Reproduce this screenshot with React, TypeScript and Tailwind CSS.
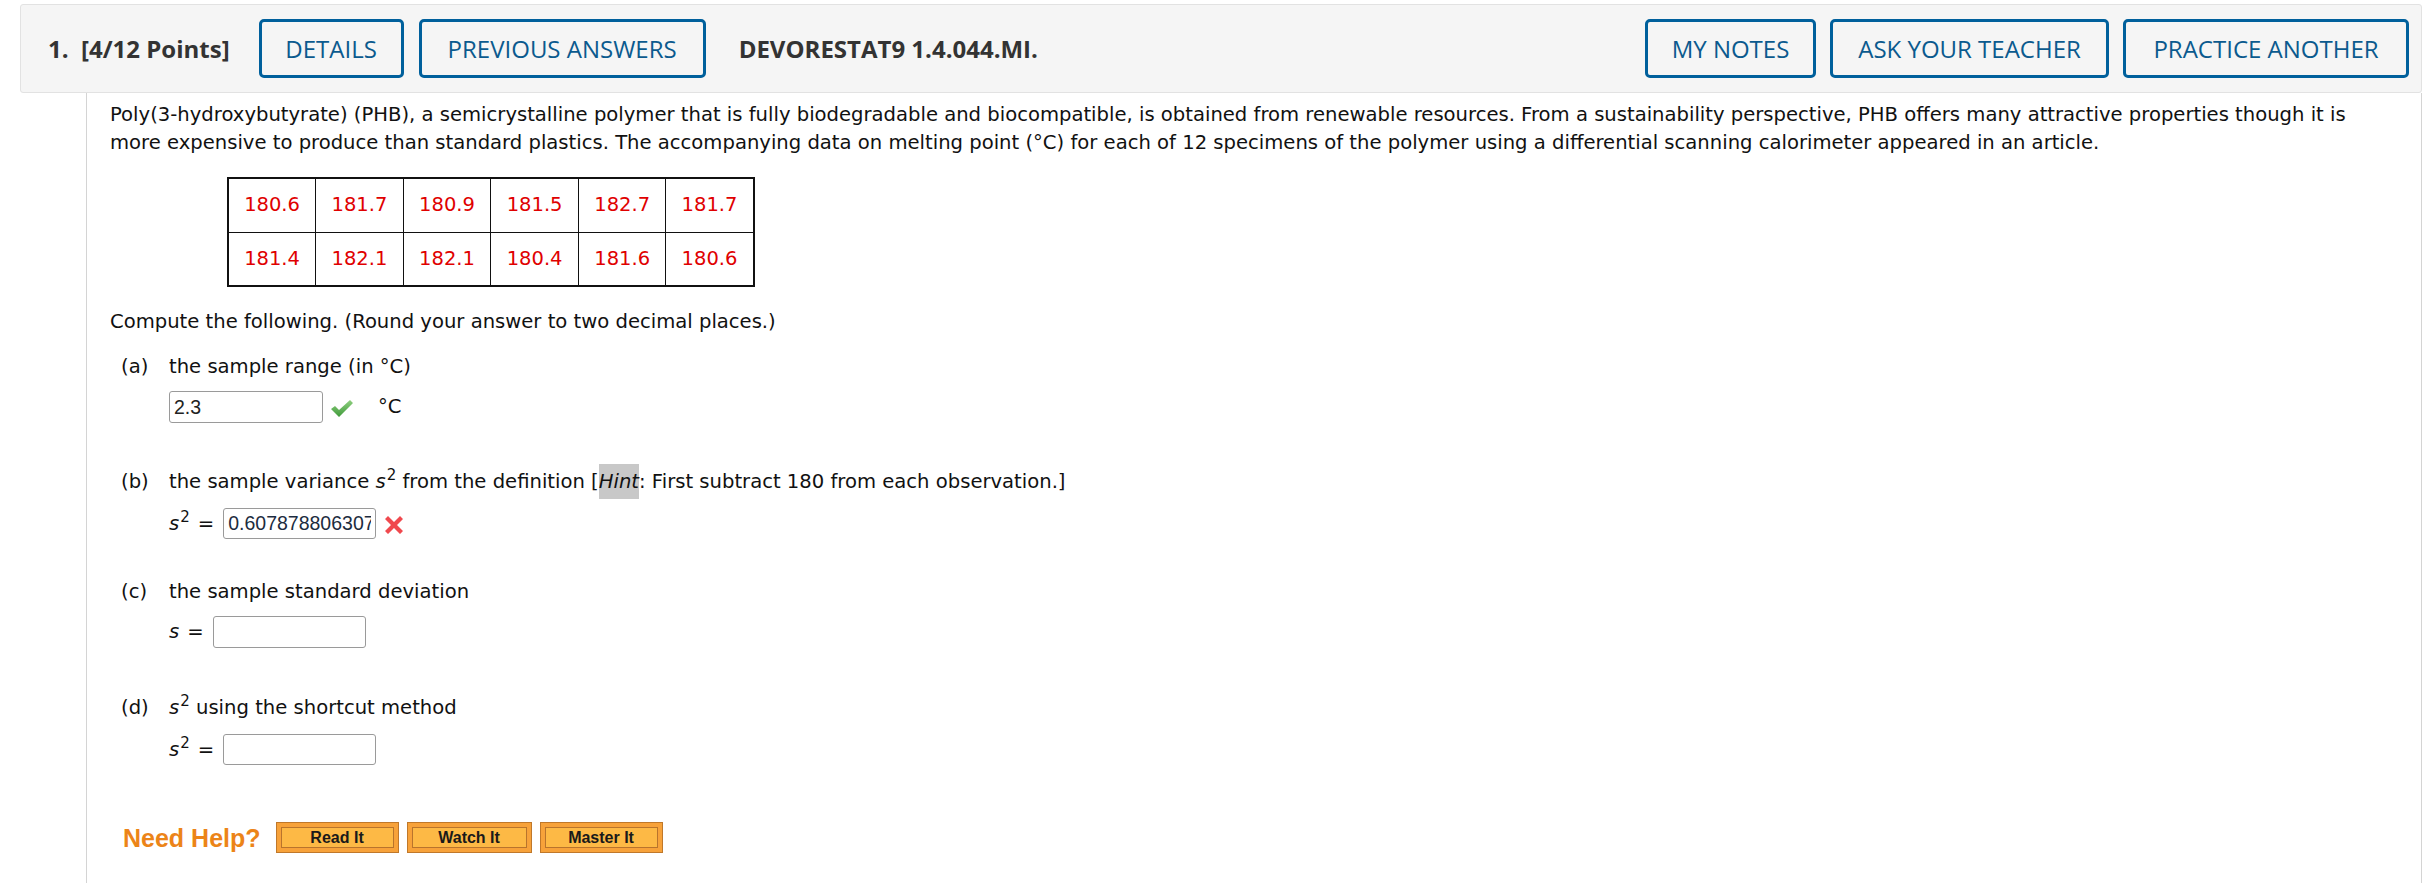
import React from 'react'

const headerFont = { fontFamily: '"Open Sans", "Liberation Sans", sans-serif' }
const bodyFont = { fontFamily: '"DejaVu Sans", Verdana, sans-serif' }
const arial = { fontFamily: '"Liberation Sans", Arial, sans-serif' }

const data = [
  ['180.6', '181.7', '180.9', '181.5', '182.7', '181.7'],
  ['181.4', '182.1', '182.1', '180.4', '181.6', '180.6'],
]

function HeadButton({ label, w }: { label: string; w: string }) {
  return (
    <button
      className={`${w} h-[59px] rounded-[5px] border-[3px] border-[#00609c] bg-[#f5f5f5] text-[24px] text-[#0b5a8e] flex items-center justify-center`}
      style={headerFont}
    >
      {label}
    </button>
  )
}

function Check() {
  return (
    <svg width="24" height="20" viewBox="0 0 24 20">
      <defs>
        <linearGradient id="g" x1="0" y1="0" x2="0" y2="1">
          <stop offset="0" stopColor="#8fcf7f" />
          <stop offset="1" stopColor="#3f9a3a" />
        </linearGradient>
      </defs>
      <path d="M1 10 L5 7 L9 11 L20 1 L23 4 L9 18 Z" fill="url(#g)" />
    </svg>
  )
}

function Cross() {
  return (
    <svg width="22" height="22" viewBox="0 0 22 22">
      <path
        d="M2 5 L5 2 L11 8 L17 2 L20 5 L14 11 L20 17 L17 20 L11 14 L5 20 L2 17 L8 11 Z"
        fill="#f0494e"
      />
    </svg>
  )
}

function HelpButton({ label, w }: { label: string; w: string }) {
  return (
    <button className={`${w} h-[31px] border border-[#c0782a] bg-[#f7a23a] p-[4px]`}>
      <div
        className="h-full w-full border border-[#b9742c] bg-[#fdb945] flex items-center justify-center text-[16px] font-bold text-[#1a1a1a]"
        style={arial}
      >
        {label}
      </div>
    </button>
  )
}

function Sq() {
  return (
    <span className="italic">
      s<sup className="not-italic text-[15px] -top-[8px] ml-[1px]">2</sup>
    </span>
  )
}

export default function App() {
  return (
    <div className="w-full h-[883px] bg-white pl-[20px] pr-[12px] pt-[4px] overflow-hidden text-[#111]" style={bodyFont}>
      {/* header bar */}
      <div className="h-[89px] bg-[#f5f5f5] border border-[#e2e2e2] rounded-[3px] flex items-center pl-[27px] pr-[12px]">
        <span className="text-[24px] font-bold text-[#333]" style={headerFont}>
          1.&nbsp; [4/12 Points]
        </span>
        <div className="ml-[29px] flex gap-[15px]">
          <HeadButton label="DETAILS" w="w-[145px]" />
          <HeadButton label="PREVIOUS ANSWERS" w="w-[287px]" />
        </div>
        <span className="ml-[33px] text-[24px] font-bold text-[#333]" style={headerFont}>
          DEVORESTAT9 1.4.044.MI.
        </span>
        <div className="ml-auto flex gap-[14px]">
          <HeadButton label="MY NOTES" w="w-[171px]" />
          <HeadButton label="ASK YOUR TEACHER" w="w-[279px]" />
          <HeadButton label="PRACTICE ANOTHER" w="w-[286px]" />
        </div>
      </div>

      {/* question body */}
      <div className="ml-[66px] h-full border-l border-r border-[#d4d4d4] pl-[23px] pt-[8px] text-[19.6px] leading-[28px]">
        <p>
          Poly(3-hydroxybutyrate) (PHB), a semicrystalline polymer that is fully biodegradable and biocompatible, is obtained from renewable resources. From a sustainability perspective, PHB offers many attractive properties though it is
          <br />
          more expensive to produce than standard plastics. The accompanying data on melting point (°C) for each of 12 specimens of the polymer using a differential scanning calorimeter appeared in an article.
        </p>

        <table className="ml-[117px] mt-[20px] border-collapse border-2 border-[#111] text-[19.5px]">
          <tbody>
            {data.map((row, i) => (
              <tr key={i} className="h-[54px]">
                {row.map((v, j) => (
                  <td key={j} className="w-[87.6px] border-[1.5px] border-[#111] text-center text-[#e00000]">
                    {v}
                  </td>
                ))}
              </tr>
            ))}
          </tbody>
        </table>

        <p className="mt-[21px]">Compute the following. (Round your answer to two decimal places.)</p>

        <div className="mt-[17px] pl-[11px]">
          {/* (a) */}
          <div className="flex">
            <span className="w-[48px]">(a)</span>
            <span>the sample range (in °C)</span>
          </div>
          <div className="mt-[10px] ml-[48px] flex items-center">
            <input
              readOnly
              value="2.3"
              className="w-[154px] h-[32px] rounded-[3px] border border-[#9a9a9a] px-[4px] text-[19.5px] text-[#222]"
              style={arial}
            />
            <span className="ml-[7px] mt-[4px]">
              <Check />
            </span>
            <span className="ml-[24px]">°C</span>
          </div>

          {/* (b) */}
          <div className="mt-[45px] flex">
            <span className="w-[48px]">(b)</span>
            <span>
              the sample variance <Sq /> from the definition [
              <span className="bg-[#c8c8c8] italic py-[6px]">Hint</span>: First subtract 180 from each observation.]
            </span>
          </div>
          <div className="mt-[12px] ml-[48px] flex items-center">
            <Sq />
            <span className="ml-[8px] mr-[9px]">=</span>
            <input
              readOnly
              value="0.607878806307"
              className="w-[153px] h-[31px] rounded-[3px] border border-[#9a9a9a] px-[4px] text-[19.5px] text-[#1c2c40]"
              style={arial}
            />
            <span className="ml-[7px] mt-[3px]">
              <Cross />
            </span>
          </div>

          {/* (c) */}
          <div className="mt-[39px] flex">
            <span className="w-[48px]">(c)</span>
            <span>the sample standard deviation</span>
          </div>
          <div className="mt-[10px] ml-[48px] flex items-center">
            <span className="italic">s</span>
            <span className="ml-[8px] mr-[9px]">=</span>
            <input readOnly className="w-[153px] h-[32px] rounded-[3px] border border-[#9a9a9a]" />
          </div>

          {/* (d) */}
          <div className="mt-[46px] flex">
            <span className="w-[48px]">(d)</span>
            <span>
              <Sq /> using the shortcut method
            </span>
          </div>
          <div className="mt-[12px] ml-[48px] flex items-center">
            <Sq />
            <span className="ml-[8px] mr-[9px]">=</span>
            <input readOnly className="w-[153px] h-[31px] rounded-[3px] border border-[#9a9a9a]" />
          </div>
        </div>

        {/* help row */}
        <div className="mt-[57px] ml-[13px] flex items-center">
          <span className="text-[25px] font-bold text-[#ec8418] mr-[15px]" style={arial}>
            Need Help?
          </span>
          <div className="flex gap-[8px]">
            <HelpButton label="Read It" w="w-[123px]" />
            <HelpButton label="Watch It" w="w-[125px]" />
            <HelpButton label="Master It" w="w-[123px]" />
          </div>
        </div>
      </div>
    </div>
  )
}
